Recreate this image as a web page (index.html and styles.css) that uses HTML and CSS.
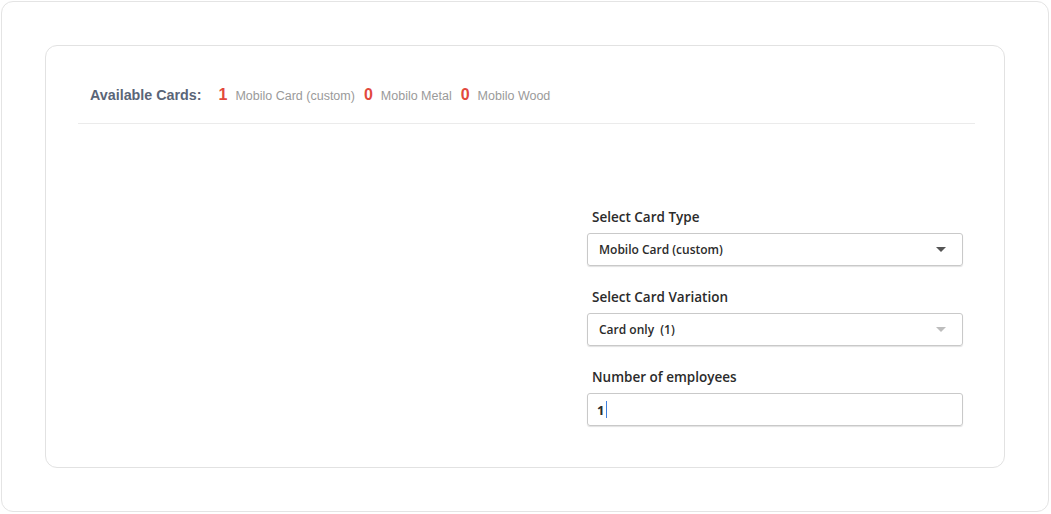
FILE: index.html
```html
<!DOCTYPE html>
<html>
<head>
<meta charset="utf-8">
<link rel="stylesheet" href="styles.css">
</head>
<body>
<div class="frame">
  <div class="card">
    <div class="summary">
      <span class="summary-title">Available Cards:</span>
      <span class="count">1</span><span class="kind">Mobilo Card (custom)</span>
      <span class="count">0</span><span class="kind">Mobilo Metal</span>
      <span class="count">0</span><span class="kind">Mobilo Wood</span>
    </div>
    <div class="body">
      <div class="form">
        <div class="field">
          <div class="label">Select Card Type</div>
          <div class="control">
            <span class="value">Mobilo Card (custom)</span>
            <span class="caret dark"></span>
          </div>
        </div>
        <div class="field">
          <div class="label">Select Card Variation</div>
          <div class="control">
            <span class="value">Card only &nbsp;(1)</span>
            <span class="caret light"></span>
          </div>
        </div>
        <div class="field">
          <div class="label">Number of employees</div>
          <div class="control input">
            <span class="value">1</span><span class="cursor"></span>
          </div>
        </div>
      </div>
    </div>
  </div>
</div>
</body>
</html>
```
FILE: styles.css
```css
* { box-sizing: border-box; }
html, body { margin: 0; padding: 0; background: #ffffff; }
body { width: 1051px; height: 514px; overflow: hidden; }

.frame {
  margin: 1px 2px 0 1px;
  height: 511px;
  border: 1px solid #e4e4e4;
  border-radius: 12px;
  padding: 43px 43px 0 43px;
}

.card {
  height: 423px;
  border: 1px solid #e2e2e2;
  border-radius: 12px;
  display: flex;
  flex-direction: column;
}

.summary {
  margin: 0 29px 0 32px;
  padding: 40px 0 15px 12px;
  border-bottom: 1px solid #ebebeb;
  display: flex;
  align-items: baseline;
  height: 78px;
}

.summary-title {
  font-family: "Liberation Sans", Arial, sans-serif;
  font-weight: 700;
  font-size: 14.3px;
  color: #5a6577;
  margin-right: 17px;
}

.count {
  font-family: "Liberation Sans", Arial, sans-serif;
  font-weight: 700;
  font-size: 16px;
  color: #e2493d;
  margin-right: 8px;
}

.kind {
  font-family: "Liberation Sans", Arial, sans-serif;
  font-size: 12.5px;
  color: #9a9a9a;
  margin-right: 9px;
}

.body {
  flex: 1;
  display: flex;
  justify-content: flex-end;
  padding: 84px 41px 0 0;
}

.form {
  width: 376px;
  display: flex;
  flex-direction: column;
  gap: 22px;
}

.field { display: flex; flex-direction: column; gap: 7px; }

.label {
  font-family: "Open Sans", "Noto Sans", sans-serif;
  font-weight: 600;
  font-size: 13.5px;
  line-height: 18px;
  color: #2b2b2b;
  padding-left: 5px;
}

.control {
  height: 33px;
  border: 1px solid #c9c9c9;
  border-radius: 3px;
  box-shadow: 0 1px 1px rgba(0,0,0,0.12);
  display: flex;
  align-items: center;
  justify-content: space-between;
  padding: 0 16px 0 11px;
}

.control.input { justify-content: flex-start; padding-left: 9px; }

.value {
  font-family: "Open Sans", "Noto Sans", sans-serif;
  font-weight: 600;
  font-size: 12px;
  color: #2b2b2b;
}

.input .value { font-size: 13px; font-weight: 700; }

.cursor {
  width: 1px;
  height: 17px;
  background: #3d7fe0;
  margin-left: 2px;
}

.caret {
  width: 0;
  height: 0;
  border-left: 5px solid transparent;
  border-right: 5px solid transparent;
  border-top: 5px solid #555;
}
.caret.light { border-top-color: #bdbdbd; }
```
